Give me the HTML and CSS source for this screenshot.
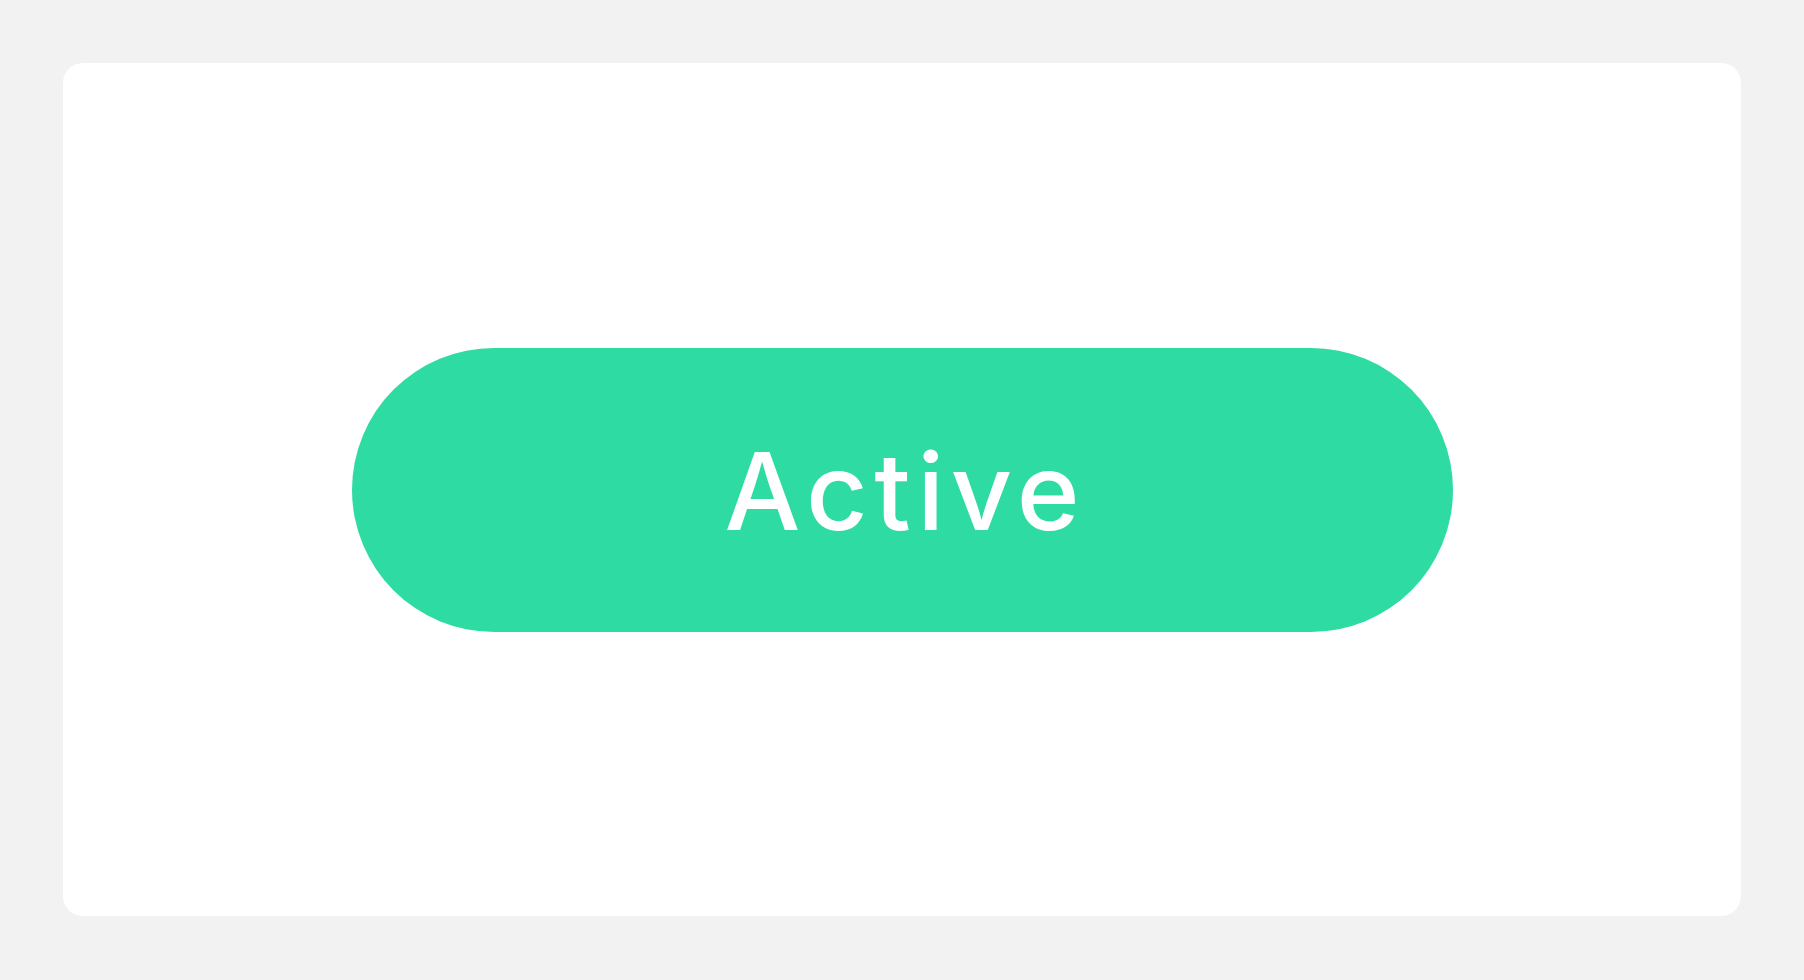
FILE: index.html
```html
<!DOCTYPE html>
<html>
<head>
<meta charset="utf-8">
<link rel="stylesheet" href="styles.css">
</head>
<body>
<div class="page">
  <div class="card">
    <button class="pill"><span class="label">Active</span></button>
  </div>
</div>
</body>
</html>
```
FILE: styles.css
```css
html, body {
  margin: 0;
  padding: 0;
  width: 1804px;
  height: 980px;
  background: #f2f2f2;
  overflow: hidden;
}
.page {
  box-sizing: border-box;
  width: 1804px;
  height: 980px;
  padding: 63px 63px 64px 63px;
}
.card {
  width: 100%;
  height: 100%;
  background: #ffffff;
  border-radius: 20px;
  display: flex;
  align-items: center;
  justify-content: center;
}
.pill {
  width: 1101px;
  height: 284px;
  border: none;
  border-radius: 142px;
  background: #2edba3;
  color: #ffffff;
  font-family: Inter, "Noto Sans", sans-serif;
  font-weight: 450;
  font-size: 107px;
  line-height: 1;
  padding: 4px 0 0 0;
  display: flex;
  align-items: center;
  justify-content: center;
}
.label {
  letter-spacing: 6.5px;
  margin-right: -6.5px;
}
```
